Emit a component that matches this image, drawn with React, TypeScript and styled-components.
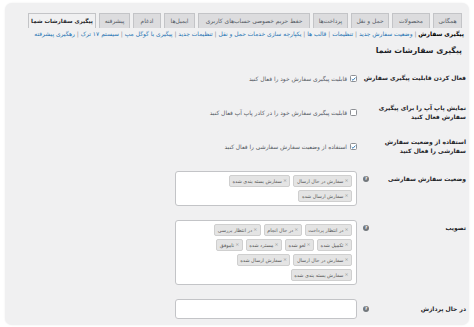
import React from "react";
import styled, { createGlobalStyle } from "styled-components";

const GlobalStyle = createGlobalStyle`
  html, body {
    margin: 0;
    padding: 0;
    background: #ffffff;
  }
  body {
    font-family: "DejaVu Sans", "Noto Sans", sans-serif;
    color: #1d2327;
  }
`;

const Page = styled.div`
  width: 474px;
  height: 327px;
  box-sizing: border-box;
  padding: 3px 5px 2px 5px;
`;

const Panel = styled.div`
  direction: rtl;
  height: 100%;
  box-sizing: border-box;
  background: #f0f0f1;
  border-radius: 7px;
  box-shadow: 0 0 2px rgba(0, 0, 0, 0.08);
  padding: 10px 3px 0 5px;
  overflow: hidden;
`;

const TabBar = styled.div`
  display: flex;
  gap: 3px;
  padding-right: 4px;
  height: 15px;
`;

const Tab = styled.div<{ $w: number; $active?: boolean }>`
  width: ${(p) => p.$w}px;
  box-sizing: border-box;
  height: 15px;
  display: flex;
  align-items: center;
  justify-content: center;
  overflow: hidden;
  white-space: nowrap;
  font-size: ${(p) => (p.$active ? 5.6 : 5.9)}px;
  font-weight: ${(p) => (p.$active ? 700 : 400)};
  color: ${(p) => (p.$active ? "#1d2327" : "#50575e")};
  background: ${(p) => (p.$active ? "#f0f0f1" : "#dcdcde")};
  border: 1px solid #c3c4c7;
  border-bottom: none;
`;

const SubNav = styled.div`
  margin-top: 2px;
  padding-right: 2px;
  height: 8px;
  line-height: 8px;
  font-size: 5.95px;
  white-space: nowrap;
  color: #8c8f94;
`;

const Current = styled.span`
  color: #000;
  font-weight: 700;
`;

const NavLink = styled.span`
  color: #2271b1;
`;

const Heading = styled.h2`
  margin: 8px 4px 5.5px 0;
  font-size: 7.8px;
  line-height: 10px;
  font-weight: 700;
  color: #1d2327;
`;

const Row = styled.div`
  display: flex;
  padding: 7px 0;
`;

const Th = styled.div<{ $pt?: number }>`
  width: 109px;
  flex: none;
  display: flex;
  justify-content: space-between;
  align-items: flex-start;
  padding-top: ${(p) => p.$pt ?? 0}px;
  box-sizing: border-box;
`;

const CheckTh = styled(Th)`
  align-items: center;
`;

const Label = styled.div`
  font-size: 6px;
  line-height: 8.5px;
  font-weight: 700;
  white-space: nowrap;
  color: #1d2327;
`;

const Help = styled.span`
  width: 6px;
  height: 6px;
  margin: 1px 0 0 6px;
  border-radius: 50%;
  background: #72777c;
  color: #fff;
  font-size: 4.5px;
  line-height: 6px;
  font-weight: 700;
  text-align: center;
`;

const CheckField = styled.label`
  min-height: 20px;
  display: flex;
  align-items: center;
  gap: 3px;
  font-size: 5.9px;
  color: #50575e;
  white-space: nowrap;
`;

const Box = styled.span`
  width: 7px;
  height: 7px;
  box-sizing: border-box;
  border: 1px solid #8c8f94;
  border-radius: 1.5px;
  background: #fff;
  display: flex;
  align-items: center;
  justify-content: center;
`;

const Select = styled.div`
  width: 182px;
  box-sizing: border-box;
  background: #fff;
  border: 1px solid #c3c4c7;
  border-radius: 3px;
  padding: 3px 4px;
  display: flex;
  flex-wrap: wrap;
  gap: 3px 3px;
  align-content: flex-start;
`;

const Chip = styled.span`
  height: 12px;
  box-sizing: border-box;
  padding: 0 2.5px;
  display: flex;
  align-items: center;
  gap: 1px;
  background: #e4e4e4;
  border: 1px solid #cfcfcf;
  border-radius: 2px;
  font-size: 4.9px;
  color: #555;
  white-space: nowrap;
`;

const Remove = styled.span`
  color: #999;
  font-size: 4.8px;
`;

const Input = styled.div`
  width: 182px;
  height: 20px;
  box-sizing: border-box;
  background: #fff;
  border: 1px solid #c3c4c7;
  border-radius: 3px;
`;

const tabs = [
  { t: "همگانی", w: 29 },
  { t: "محصولات", w: 38 },
  { t: "حمل و نقل", w: 38 },
  { t: "پرداخت‌ها", w: 35 },
  { t: "حفظ حریم خصوصی حساب‌های کاربری", w: 112 },
  { t: "ایمیل‌ها", w: 31 },
  { t: "ادغام", w: 28 },
  { t: "پیشرفته", w: 31 },
  { t: "پیگیری سفارشات شما", w: 68, active: true },
];

const links = [
  "وضعیت سفارش جدید",
  "تنظیمات",
  "قالب ها",
  "یکپارچه سازی خدمات حمل و نقل",
  "تنظیمات جدید",
  "پیگیری با گوگل مپ",
  "سیستم ۱۷ ترک",
  "رهگیری پیشرفته",
];

const Check = ({ checked }: { checked: boolean }) => (
  <Box>
    {checked && (
      <svg width="6" height="6" viewBox="0 0 10 10">
        <path d="M1.5 5.2 L4 7.6 L8.8 2.2" fill="none" stroke="#2271b1" strokeWidth="1.8" />
      </svg>
    )}
  </Box>
);

const Chips = ({ items }: { items: string[] }) => (
  <Select>
    {items.map((c) => (
      <Chip key={c}>
        <Remove>×</Remove>
        {c}
      </Chip>
    ))}
  </Select>
);

const App = () => {
  return (
    <Page>
      <GlobalStyle />
      <Panel>
        <TabBar>
          {tabs.map((t) => (
            <Tab key={t.t} $w={t.w} $active={t.active}>
              {t.t}
            </Tab>
          ))}
        </TabBar>
        <SubNav>
          <Current>پیگیری سفارش</Current>
          {links.map((l) => (
            <React.Fragment key={l}>
              {" | "}
              <NavLink>{l}</NavLink>
            </React.Fragment>
          ))}
        </SubNav>
        <Heading>پیگیری سفارشات شما</Heading>

        <Row>
          <CheckTh>
            <Label>فعال کردن قابلیت پیگیری سفارش</Label>
          </CheckTh>
          <CheckField>
            <Check checked />
            قابلیت پیگیری سفارش خود را فعال کنید
          </CheckField>
        </Row>
        <Row>
          <CheckTh>
            <Label>
              نمایش پاپ آپ را برای پیگیری
              <br />
              سفارش فعال کنید
            </Label>
          </CheckTh>
          <CheckField>
            <Check checked={false} />
            قابلیت پیگیری سفارش خود را در کادر پاپ آپ فعال کنید
          </CheckField>
        </Row>
        <Row>
          <CheckTh>
            <Label>
              استفاده از وضعیت سفارش
              <br />
              سفارشی را فعال کنید
            </Label>
          </CheckTh>
          <CheckField>
            <Check checked />
            استفاده از وضعیت سفارش سفارشی را فعال کنید
          </CheckField>
        </Row>

        <Row>
          <Th $pt={4}>
            <Label>وضعیت سفارش سفارشی</Label>
            <Help>?</Help>
          </Th>
          <Chips items={["سفارش در حال ارسال", "سفارش بسته بندی شده", "سفارش ارسال شده"]} />
        </Row>
        <Row>
          <Th $pt={4}>
            <Label>تصویب</Label>
            <Help>?</Help>
          </Th>
          <Chips
            items={[
              "در انتظار پرداخت",
              "در حال انجام",
              "در انتظار بررسی",
              "تکمیل شده",
              "لغو شده",
              "مسترد شده",
              "ناموفق",
              "سفارش در حال ارسال",
              "سفارش ارسال شده",
              "سفارش بسته بندی شده",
            ]}
          />
        </Row>
        <Row>
          <Th $pt={6}>
            <Label>در حال پردازش</Label>
            <Help>?</Help>
          </Th>
          <Input />
        </Row>
      </Panel>
    </Page>
  );
};

export default App;
